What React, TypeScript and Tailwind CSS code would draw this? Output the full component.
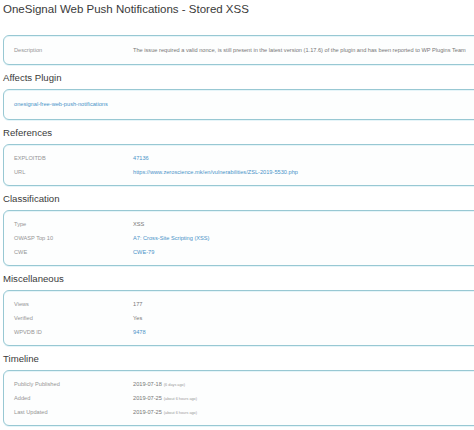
import React from "react";

type Row = { label: string; value: React.ReactNode };

const Link = ({ children }: { children: React.ReactNode }) => (
  <span className="text-[#4a93c8]">{children}</span>
);

const Box = ({ rows, pad = "py-[6px]" }: { rows: Row[]; pad?: string }) => (
  <div
    className={`ml-[3px] mr-[-12px] rounded-[6px] border border-[#98c8d3] bg-[#fdfefe] shadow-[inset_0_1px_0_#e6f5f9,0_1px_0_#e6f5f9] ${pad}`}
  >
    {rows.map((r, i) => (
      <div key={i} className="flex h-[14px] items-center">
        <div className="w-[129px] shrink-0 pl-[10px] text-[#959595]">{r.label}</div>
        <div className="whitespace-nowrap text-[#777]">{r.value}</div>
      </div>
    ))}
  </div>
);

const Heading = ({ children }: { children: React.ReactNode }) => (
  <div className="ml-[3px] mt-[6px] mb-[5px] h-[13px] text-[9.6px] leading-[13px] text-[#3a3a3a]">
    {children}
  </div>
);

const Ago = ({ children }: { children: React.ReactNode }) => (
  <span className="ml-[2px] text-[3.8px] text-[#999]">{children}</span>
);

export default function App() {
  return (
    <div
      className="w-[474px] h-[430px] overflow-hidden bg-white text-[5.65px]"
      style={{ fontFamily: '"Liberation Sans", Arial, sans-serif' }}
    >
      <div className="ml-[3px] pt-[2px] h-[35px] text-[11.5px] leading-[14px] text-[#3a3a3a]">
        OneSignal Web Push Notifications - Stored XSS
      </div>
      <Box
        pad="py-[7px]"
        rows={[
          {
            label: "Description",
            value:
              "The issue required a valid nonce, is still present in the latest version (1.17.6) of the plugin and has been reported to WP Plugins Team",
          },
        ]}
      />
      <Heading>Affects Plugin</Heading>
      <div className="ml-[3px] mr-[-12px] flex h-[31px] items-center rounded-[6px] border border-[#98c8d3] bg-[#fdfefe] pl-[10px] shadow-[inset_0_1px_0_#e6f5f9,0_1px_0_#e6f5f9]">
        <Link>onesignal-free-web-push-notifications</Link>
      </div>
      <Heading>References</Heading>
      <Box
        rows={[
          { label: "EXPLOITDB", value: <Link>47136</Link> },
          {
            label: "URL",
            value: (
              <Link>https://www.zeroscience.mk/en/vulnerabilities/ZSL-2019-5530.php</Link>
            ),
          },
        ]}
      />
      <Heading>Classification</Heading>
      <Box
        rows={[
          { label: "Type", value: "XSS" },
          { label: "OWASP Top 10", value: <Link>A7: Cross-Site Scripting (XSS)</Link> },
          { label: "CWE", value: <Link>CWE-79</Link> },
        ]}
      />
      <Heading>Miscellaneous</Heading>
      <Box
        rows={[
          { label: "Views", value: "177" },
          { label: "Verified", value: "Yes" },
          { label: "WPVDB ID", value: <Link>9478</Link> },
        ]}
      />
      <Heading>Timeline</Heading>
      <Box
        rows={[
          {
            label: "Publicly Published",
            value: (
              <>
                2019-07-18<Ago>(6 days ago)</Ago>
              </>
            ),
          },
          {
            label: "Added",
            value: (
              <>
                2019-07-25<Ago>(about 6 hours ago)</Ago>
              </>
            ),
          },
          {
            label: "Last Updated",
            value: (
              <>
                2019-07-25<Ago>(about 6 hours ago)</Ago>
              </>
            ),
          },
        ]}
      />
    </div>
  );
}
